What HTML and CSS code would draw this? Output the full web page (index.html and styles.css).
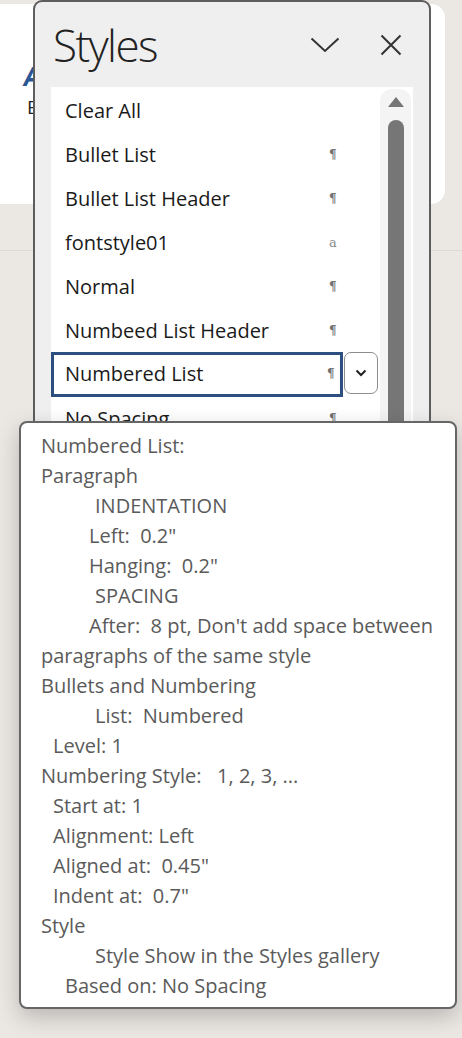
FILE: index.html
```html
<!DOCTYPE html>
<html lang="en">
<head>
    <meta charset="UTF-8">
    <meta name="viewport" content="width=device-width, initial-scale=1.0">
    <title>Styles</title>
    <link rel="stylesheet" href="styles.css">
</head>
<body>
    <div class="doc">
        <span class="doc-a">A</span>
        <span class="doc-e">E</span>
    </div>
    <div class="ruler-line"></div>

    <div class="styles-pane">
        <div class="pane-head">
            <h1>Styles</h1>
            <button class="icon-btn chevron-btn" title="Options">
                <svg width="30" height="16" viewBox="0 0 30 16"><path d="M1.5 1.5 L15 14 L28.5 1.5" fill="none" stroke="#333" stroke-width="2"/></svg>
            </button>
            <button class="icon-btn close-btn" title="Close">
                <svg width="22" height="22" viewBox="0 0 22 22"><path d="M1.5 1.5 L20.5 20.5 M20.5 1.5 L1.5 20.5" fill="none" stroke="#333" stroke-width="2"/></svg>
            </button>
        </div>

        <div class="style-list">
            <ul class="items">
                <li class="item"><span class="name">Clear All</span></li>
                <li class="item"><span class="name">Bullet List</span><span class="mark">¶</span></li>
                <li class="item"><span class="name">Bullet List Header</span><span class="mark">¶</span></li>
                <li class="item"><span class="name">fontstyle01</span><span class="mark char">a</span></li>
                <li class="item"><span class="name">Normal</span><span class="mark">¶</span></li>
                <li class="item"><span class="name">Numbeed List Header</span><span class="mark">¶</span></li>
                <li class="item selected">
                    <span class="name">Numbered List</span><span class="mark">¶</span>
                    <button class="item-menu">
                        <svg width="12" height="8" viewBox="0 0 12 8"><path d="M1.5 1.5 L6 6 L10.5 1.5" fill="none" stroke="#222" stroke-width="2"/></svg>
                    </button>
                </li>
                <li class="item"><span class="name">No Spacing</span><span class="mark">¶</span></li>
            </ul>
            <div class="scrollbar">
                <div class="arrow-up"></div>
                <div class="thumb"></div>
            </div>
        </div>
    </div>

    <div class="tooltip">
        <div class="line">Numbered List:</div>
        <div class="line">Paragraph</div>
        <div class="line ind-3">INDENTATION</div>
        <div class="line ind-2">Left:  0.2"</div>
        <div class="line ind-2">Hanging:  0.2"</div>
        <div class="line ind-3">SPACING</div>
        <div class="line ind-2">After:  8 pt, Don't add space between</div>
        <div class="line">paragraphs of the same style</div>
        <div class="line">Bullets and Numbering</div>
        <div class="line ind-3">List:  Numbered</div>
        <div class="line ind-1">Level: 1</div>
        <div class="line">Numbering Style:   1, 2, 3, ...</div>
        <div class="line ind-1">Start at: 1</div>
        <div class="line ind-1">Alignment: Left</div>
        <div class="line ind-1">Aligned at:  0.45"</div>
        <div class="line ind-1">Indent at:  0.7"</div>
        <div class="line">Style</div>
        <div class="line ind-3">Style Show in the Styles gallery</div>
        <div class="line ind-4">Based on: No Spacing</div>
    </div>
</body>
</html>
```

FILE: styles.css
```css
body {
    margin: 0;
    width: 462px;
    height: 1038px;
    overflow: hidden;
    position: relative;
    background-color: #ebe8e4;
    font-family: "Open Sans", "Noto Sans", sans-serif;
    color: #1a1a1a;
}
.doc {
    margin-top: 4px;
    width: 445px;
    height: 200px;
    background: #ffffff;
    border-radius: 0 14px 14px 0;
    position: relative;
}
.doc-a {
    position: absolute;
    left: 24px;
    top: 60px;
    font-size: 26px;
    line-height: 24px;
    font-style: italic;
    font-weight: 700;
    color: #2b5797;
}
.doc-e {
    position: absolute;
    left: 27px;
    top: 92px;
    font-size: 19px;
    line-height: 22px;
    color: #222;
}
.ruler-line {
    margin-top: 46px;
    height: 1px;
    background: #dcd8d3;
}
.styles-pane {
    position: absolute;
    left: 33px;
    top: 0;
    width: 398px;
    height: 560px;
    box-sizing: border-box;
    background: #efefef;
    border: 2px solid #5e5e5e;
    border-radius: 9px;
    overflow: hidden;
}
.pane-head {
    height: 85px;
    display: flex;
    align-items: center;
    padding: 0 27px 0 18px;
}
.pane-head h1 {
    margin: 0;
    font-size: 44px;
    font-weight: 300;
    line-height: 1;
    letter-spacing: -1.6px;
    color: #222;
}
.icon-btn {
    border: none;
    background: none;
    padding: 0;
    display: flex;
}
.chevron-btn {
    margin-left: auto;
}
.close-btn {
    margin-left: 40px;
}
.style-list {
    margin-left: 16px;
    width: 362px;
    height: 500px;
    background: #ffffff;
    display: flex;
}
.items {
    list-style: none;
    margin: 2px 0 0 0;
    padding: 0;
    width: 329px;
}
.item {
    display: flex;
    height: 44px;
}
.item .name {
    flex: none;
    width: 264px;
    padding-left: 14px;
    font-size: 20px;
    line-height: 44px;
    white-space: nowrap;
}
.item .mark {
    font-family: "DejaVu Serif", serif;
    font-size: 12px;
    font-weight: 700;
    line-height: 44px;
    color: #727272;
}
.item .mark.char {
    font-weight: 400;
    font-size: 13px;
    color: #8a8a8a;
}
.item.selected .name {
    width: 262px;
    padding-left: 11px;
    border: 3px solid #2d4f7f;
    border-right: none;
    line-height: 38px;
    margin-top: -1px;
}
.item.selected .mark {
    border: 3px solid #2d4f7f;
    border-left: none;
    width: 10px;
    padding-right: 3px;
    line-height: 38px;
    margin-top: -1px;
}
.item-menu {
    width: 34px;
    height: 42px;
    margin: -1px 0 0 1px;
    padding: 0;
    background: #fff;
    border: 1.5px solid #8c8c8c;
    border-radius: 7px;
    display: flex;
    align-items: center;
    justify-content: center;
}
.scrollbar {
    width: 31px;
    margin-top: 2px;
    background: #f4f4f4;
    border-radius: 12px 12px 0 0;
    display: flex;
    flex-direction: column;
    align-items: center;
}
.arrow-up {
    margin-top: 8px;
    width: 0;
    height: 0;
    border-left: 8px solid transparent;
    border-right: 8px solid transparent;
    border-bottom: 10px solid #767676;
}
.thumb {
    margin-top: 13px;
    width: 16px;
    flex: 1;
    background: #767676;
    border-radius: 8px 8px 0 0;
}
.tooltip {
    position: absolute;
    left: 19px;
    top: 421px;
    width: 438px;
    height: 588px;
    box-sizing: border-box;
    padding: 8px 0 0 20px;
    background: #ffffff;
    border: 2px solid #666;
    border-radius: 8px;
    box-shadow: 0 8px 22px rgba(0, 0, 0, 0.22);
    color: #5a5a5a;
    font-size: 20px;
}
.tooltip .line {
    line-height: 30px;
    white-space: pre;
}
.tooltip .ind-1 {
    padding-left: 12px;
}
.tooltip .ind-2 {
    padding-left: 48px;
}
.tooltip .ind-3 {
    padding-left: 54px;
}
.tooltip .ind-4 {
    padding-left: 24px;
}
```
